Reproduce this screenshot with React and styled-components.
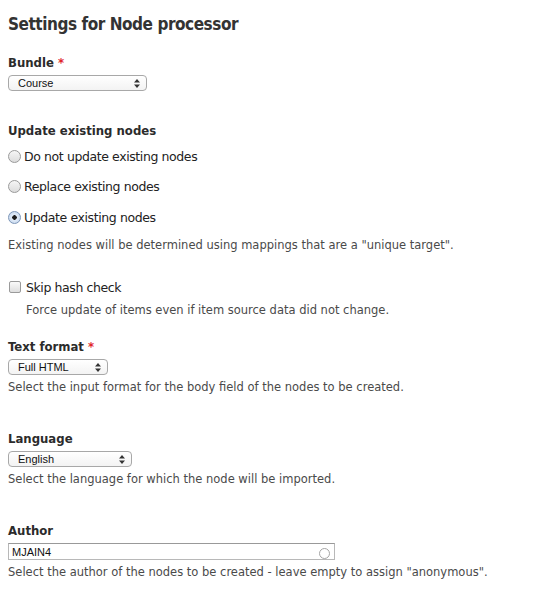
import React from 'react'
import styled, { createGlobalStyle } from 'styled-components'

const Global = createGlobalStyle`
  body {
    margin: 0;
    background: #fff;
    font-family: "DejaVu Sans", "Noto Sans", sans-serif;
    color: #333;
  }
`

const Page = styled.div`
  padding: 14px 8px 0 8px;
  width: 537px;
`

const Title = styled.h2`
  font-family: "DejaVu Sans Condensed", "DejaVu Sans", sans-serif;
  font-size: 17px;
  letter-spacing: -0.45px;
  font-weight: bold;
  margin: 0 0 21px 0;
  line-height: 20px;
  color: #333;
`

const FormItem = styled.div`
  margin-bottom: ${(p) => p.gap ?? 18}px;
`

const Label = styled.div`
  font-family: "DejaVu Sans Condensed", "DejaVu Sans", sans-serif;
  font-size: 13px;
  font-weight: bold;
  line-height: 16px;
  margin-bottom: ${(p) => p.below ?? 4}px;
  color: #2b2b2b;
`

const Required = styled.span`
  color: #e0262a;
  margin-left: 4px;
`

const SelectBox = styled.div`
  box-sizing: border-box;
  width: ${(p) => p.width}px;
  height: 16px;
  border: 1px solid #a8a8a8;
  border-radius: 4px;
  background: linear-gradient(#fff, #f3f3f3);
  display: flex;
  align-items: center;
  justify-content: space-between;
  padding: 0 6px 0 9px;
  font-family: "Liberation Sans", Arial, sans-serif;
  font-size: 11px;
  color: #111;
`

const Arrows = styled.svg`
  width: 6px;
  height: 9px;
`

const Description = styled.div`
  font-size: 11.5px;
  line-height: 16px;
  color: #4a4a4a;
  margin-top: ${(p) => p.top ?? 4}px;
  padding-left: ${(p) => p.indent ?? 0}px;
`

const RadioRow = styled.div`
  display: flex;
  align-items: center;
  height: 18px;
  margin-bottom: ${(p) => p.gap ?? 12}px;
  font-size: 12.5px;
  letter-spacing: -0.4px;
  color: #222;
`

const RadioCircle = styled.span`
  box-sizing: border-box;
  width: 13px;
  height: 13px;
  border-radius: 50%;
  border: 1px solid ${(p) => (p.checked ? '#7d96b8' : '#9a9a9a')};
  background: ${(p) =>
    p.checked
      ? 'radial-gradient(circle, #1e1e1e 0 2px, #e2ecf8 2.5px, #bcd0ea 100%)'
      : 'linear-gradient(#f6f6f6, #dcdcdc)'};
  margin-right: 3px;
  flex: none;
`

const CheckBox = styled.span`
  box-sizing: border-box;
  width: 12px;
  height: 12px;
  border-radius: 2px;
  border: 1px solid #9a9a9a;
  background: linear-gradient(#fafafa, #dedede);
  margin-right: 5px;
  margin-left: 1px;
  flex: none;
`

const TextInput = styled.div`
  box-sizing: border-box;
  width: 327px;
  height: 17px;
  border: 1px solid #b8b8b8;
  border-top-color: #999;
  display: flex;
  align-items: center;
  justify-content: space-between;
  padding: 0 4px 0 3px;
  font-family: "Liberation Sans", Arial, sans-serif;
  font-size: 11px;
  color: #111;
`

const Throbber = styled.span`
  box-sizing: border-box;
  width: 11px;
  height: 11px;
  border-radius: 50%;
  border: 1.5px solid #a5a5a5;
  margin-top: 3px;
`

const Select = ({ value, width }) => (
  <SelectBox width={width}>
    <span>{value}</span>
    <Arrows viewBox="0 0 6 9">
      <path d="M3 0 L6 3.5 L0 3.5 Z M3 9 L6 5.5 L0 5.5 Z" fill="#333" />
    </Arrows>
  </SelectBox>
)

const App = () => {
  return (
    <Page>
      <Global />
      <Title>Settings for Node processor</Title>

      <FormItem gap={32}>
        <Label>
          Bundle<Required>*</Required>
        </Label>
        <Select value="Course" width={139} />
      </FormItem>

      <FormItem gap={25}>
        <Label below={8}>Update existing nodes</Label>
        <RadioRow>
          <RadioCircle />
          Do not update existing nodes
        </RadioRow>
        <RadioRow gap={13}>
          <RadioCircle />
          Replace existing nodes
        </RadioRow>
        <RadioRow gap={0}>
          <RadioCircle checked />
          Update existing nodes
        </RadioRow>
        <Description top={11}>
          Existing nodes will be determined using mappings that are a "unique target".
        </Description>
      </FormItem>

      <FormItem gap={21}>
        <RadioRow gap={0}>
          <CheckBox />
          Skip hash check
        </RadioRow>
        <Description indent={18} top={6}>
          Force update of items even if item source data did not change.
        </Description>
      </FormItem>

      <FormItem gap={36}>
        <Label>
          Text format<Required>*</Required>
        </Label>
        <Select value="Full HTML" width={100} />
        <Description>Select the input format for the body field of the nodes to be created.</Description>
      </FormItem>

      <FormItem gap={36}>
        <Label>Language</Label>
        <Select value="English" width={124} />
        <Description>Select the language for which the node will be imported.</Description>
      </FormItem>

      <FormItem>
        <Label>Author</Label>
        <TextInput>
          <span>MJAIN4</span>
          <Throbber />
        </TextInput>
        <Description>Select the author of the nodes to be created - leave empty to assign "anonymous".</Description>
      </FormItem>
    </Page>
  )
}

export default App
